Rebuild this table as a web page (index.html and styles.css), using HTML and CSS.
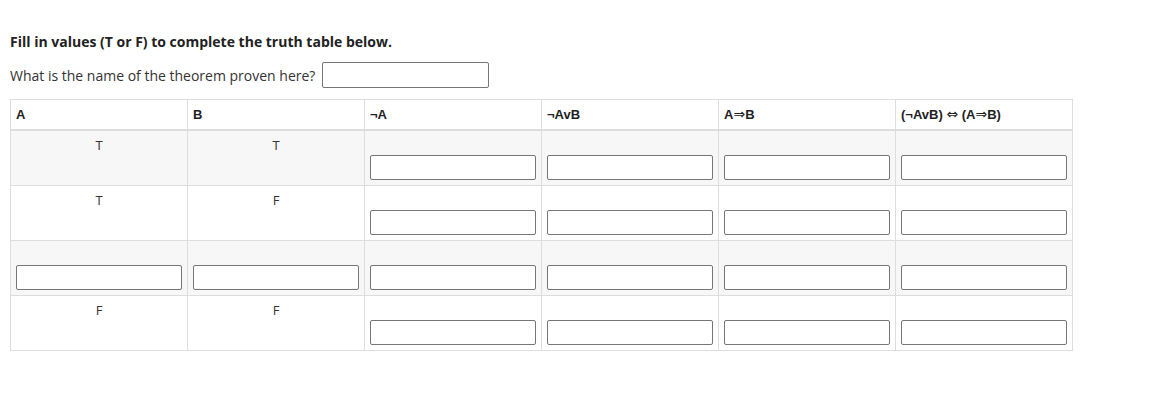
FILE: index.html
```html
<!DOCTYPE html>
<html lang="en">
<head>
<meta charset="utf-8">
<title>Truth table</title>
<link rel="stylesheet" href="styles.css">
</head>
<body>
<div class="wrap">
  <p class="title">Fill in values (T or F) to complete the truth table below.</p>
  <div class="question">
    <span>What is the name of the theorem proven here?</span>
    <input class="field name-field" type="text">
  </div>
  <table class="truth">
    <thead>
      <tr>
        <th>A</th><th>B</th><th>¬A</th><th>¬AvB</th><th>A<span class="arrow">⇒</span>B</th><th>(¬AvB) <span class="arrow">⇔</span> (A<span class="arrow">⇒</span>B)</th>
      </tr>
    </thead>
    <tbody>
      <tr class="odd">
        <td><div class="val">T</div></td>
        <td><div class="val">T</div></td>
        <td><div class="val"></div><input class="field" type="text"></td>
        <td><div class="val"></div><input class="field" type="text"></td>
        <td><div class="val"></div><input class="field" type="text"></td>
        <td><div class="val"></div><input class="field" type="text"></td>
      </tr>
      <tr>
        <td><div class="val">T</div></td>
        <td><div class="val">F</div></td>
        <td><div class="val"></div><input class="field" type="text"></td>
        <td><div class="val"></div><input class="field" type="text"></td>
        <td><div class="val"></div><input class="field" type="text"></td>
        <td><div class="val"></div><input class="field" type="text"></td>
      </tr>
      <tr class="odd">
        <td><div class="val"></div><input class="field" type="text"></td>
        <td><div class="val"></div><input class="field" type="text"></td>
        <td><div class="val"></div><input class="field" type="text"></td>
        <td><div class="val"></div><input class="field" type="text"></td>
        <td><div class="val"></div><input class="field" type="text"></td>
        <td><div class="val"></div><input class="field" type="text"></td>
      </tr>
      <tr>
        <td><div class="val">F</div></td>
        <td><div class="val">F</div></td>
        <td><div class="val"></div><input class="field" type="text"></td>
        <td><div class="val"></div><input class="field" type="text"></td>
        <td><div class="val"></div><input class="field" type="text"></td>
        <td><div class="val"></div><input class="field" type="text"></td>
      </tr>
    </tbody>
  </table>
</div>
</body>
</html>
```

FILE: styles.css
```css
html, body {
  margin: 0;
  padding: 0;
  background: #fff;
}

body {
  font-family: "Open Sans", "DejaVu Sans", "Liberation Sans", sans-serif;
  font-size: 14px;
  color: #333;
}

.wrap {
  padding: 32px 10px 0;
}

.title {
  margin: 0;
  font-weight: 700;
  font-size: 14px;
  line-height: 20px;
  color: #222;
}

.question {
  margin-top: 10px;
  height: 26px;
  display: flex;
  align-items: center;
  gap: 7px;
  font-size: 14px;
  color: #333;
}

.field {
  display: block;
  box-sizing: border-box;
  margin: 0;
  padding: 1px 4px;
  border: 1px solid #767676;
  border-radius: 2px;
  background: #fff;
  font: inherit;
}

.name-field {
  width: 167px;
  height: 26px;
}

.truth {
  margin-top: 11px;
  border-collapse: collapse;
  table-layout: fixed;
  width: 1063px;
}

.truth th,
.truth td {
  border: 1px solid #ddd;
  padding: 5px;
  vertical-align: top;
}

.truth th {
  height: 19px;
  text-align: left;
  font-family: "Liberation Sans", "DejaVu Sans", sans-serif;
  font-weight: 700;
  font-size: 13px;
  line-height: 19px;
  color: #222;
  border-bottom: 2px solid #ddd;
}

.arrow {
  font-family: "DejaVu Sans", sans-serif;
  font-weight: 400;
  font-size: 14px;
  line-height: 1;
}

.truth tr.odd td {
  background: #f7f7f7;
}

.val {
  height: 19px;
  line-height: 19px;
  text-align: center;
  font-size: 13px;
  color: #333;
}

.truth td .field {
  width: 100%;
  height: 25px;
}
```
